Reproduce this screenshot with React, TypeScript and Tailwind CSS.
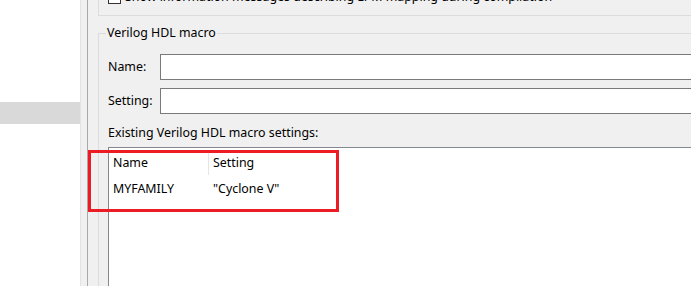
export default function App() {
  return (
    <div className="relative flex h-[286px] w-[691px] overflow-hidden bg-[#f0f0f0] font-['Noto_Sans',sans-serif] text-[12.4px] leading-4 text-black">
      {/* left navigation pane */}
      <aside className="w-[81px] shrink-0 border-r border-[#e3e3e3] bg-white pt-[102px]">
        <div className="h-[22px] bg-[#d9d9d9]" />
      </aside>

      <div className="flex-1 pl-[6px]">
        <div className="h-full border-l border-[#a9a9a9] pl-[10px]">
          {/* previous group, scrolled mostly out of view */}
          <div className="-mr-[20px] h-[16px] overflow-hidden border-b border-l border-[#dcdcdc]">
            <div className="-mt-[11px] flex h-4 items-center pl-[9px]">
              <span className="h-[13px] w-[13px] shrink-0 border border-[#333] bg-white" />
              <span className="ml-[4px] whitespace-nowrap">
                Show information messages describing LPM mapping during compilation
              </span>
            </div>
          </div>

          <fieldset className="-mr-[20px] mt-[9px] h-[300px] border-l border-t border-[#dcdcdc] pl-[7px]">
            <legend className="px-[1px] leading-4">Verilog HDL macro</legend>
            <div className="pl-[2px] pt-[13px]">
              <div className="flex h-[26px] items-center">
                <label className="w-[52px] shrink-0">Name:</label>
                <div className="h-[26px] flex-1 border border-[#7a7a7a] bg-white" />
              </div>
              <div className="mt-[8px] flex h-[26px] items-center">
                <label className="w-[52px] shrink-0">Setting:</label>
                <div className="h-[26px] flex-1 border border-[#7a7a7a] bg-white" />
              </div>
              <p className="mt-[11px] h-4">Existing Verilog HDL macro settings:</p>
              <div className="mt-[6px] h-[200px] border-l border-t border-[#828790] bg-white">
                <div className="flex h-[30px] items-center">
                  <div className="flex h-full w-[100px] items-center justify-between pl-[4px]">
                    <span>Name</span>
                    <span className="h-[23px] w-px bg-[#e5e5e5]" />
                  </div>
                  <div className="pl-[4px]">Setting</div>
                </div>
                <div className="flex h-[22px] items-center">
                  <div className="w-[100px] pl-[4px]">MYFAMILY</div>
                  <div className="pl-[4px]">"Cyclone V"</div>
                </div>
              </div>
            </div>
          </fieldset>
        </div>
      </div>

      {/* annotation highlight */}
      <div className="pointer-events-none absolute left-[88px] top-[150px] h-[62px] w-[251px] border-[3px] border-[#ed1c24]" />
    </div>
  );
}
